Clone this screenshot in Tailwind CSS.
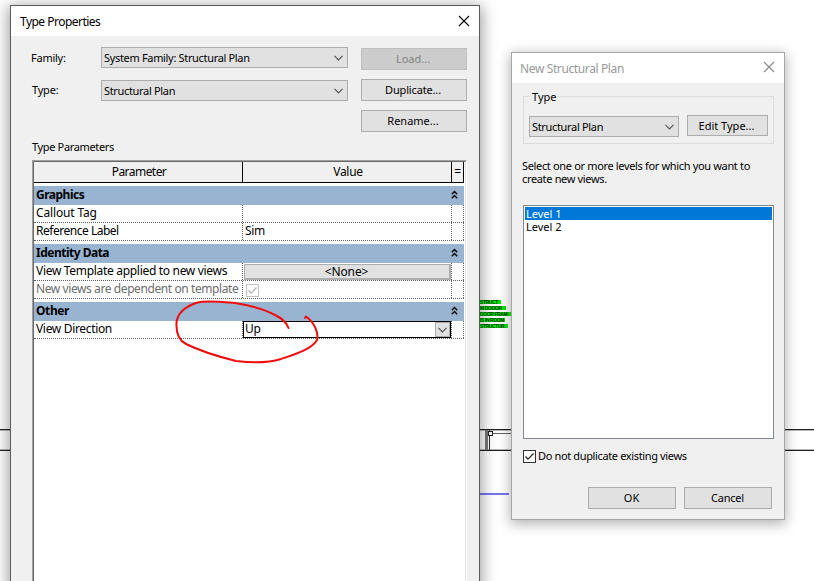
<!DOCTYPE html>
<html lang="en">
<head>
    <meta charset="UTF-8">
    <meta name="viewport" content="width=device-width, initial-scale=1.0">
    <title>Type Properties</title>
    <script src="https://cdn.jsdelivr.net/npm/@tailwindcss/browser@4"></script>
</head>
<body class="relative w-[814px] h-[581px] overflow-hidden bg-white text-black text-[11px] leading-[13px] whitespace-nowrap font-['Noto_Sans','Open_Sans',sans-serif]">

    <!-- Drawing behind the dialogs -->
    <svg class="absolute inset-0" width="814" height="581" shape-rendering="crispEdges">
        <path d="M0 429.5H814M0 450.5H814" stroke="#202020"/>
        <path d="M0 430.5H814M0 449.5H814" stroke="#b8b8b8"/>
        <path d="M486.500 430V450" stroke="#777" stroke-width="3"/>
        <path d="M489.5 430V450" stroke="#333"/>
        <path d="M490 433.5H512" stroke="#666"/>
        <rect x="488.5" y="431.5" width="4" height="4" fill="#fff" stroke="#222"/>
        <path d="M480 494H508.500" stroke="#7676f5" stroke-width="2"/>
    </svg>

    <!-- Type Properties -->
    <div class="absolute left-[10px] top-[5px] w-[470px] h-[600px] border border-[#5a5a5a] bg-[#f0f0f0] shadow-[0_3px_14px_2px_rgba(0,0,0,0.38)]">
        <div class="h-[30px] bg-white flex items-center justify-between pl-[9px] pr-[9px] text-[12px]">
            <span class="tracking-[-0.52px]">Type Properties</span>
            <svg width="12" height="12" class="mb-px"><path d="M1 1L11 11M11 1L1 11" stroke="#000" stroke-width="1.1"/></svg>
        </div>
        <div class="flex pt-[11px] pl-5">
            <div class="w-[70px]">
                <div class="h-[33px] pt-1 tracking-[-0.25px]">Family:</div>
                <div class="h-[33px] pt-[3px] pl-px tracking-[-0.2px]">Type:</div>
            </div>
            <div class="w-[247px] tracking-[-0.33px]">
                <div class="h-[21px] mb-3 border border-[#adadad] bg-[#e1e1e1] flex items-center justify-between pl-[2px] pr-1">
                    <span>System Family: Structural Plan</span>
                    <svg width="9" height="6"><path d="M.5 .8L4.500 4.800L8.500 .8" fill="none" stroke="#555" stroke-width="1.2"/></svg>
                </div>
                <div class="h-[21px] border border-[#adadad] bg-[#e1e1e1] flex items-center justify-between pl-[2px] pr-1">
                    <span>Structural Plan</span>
                    <svg width="9" height="6"><path d="M.5 .8L4.500 4.800L8.500 .8" fill="none" stroke="#555" stroke-width="1.2"/></svg>
                </div>
            </div>
            <div class="ml-[13px] mt-px w-[106px] flex flex-col gap-[9px]">
                <button class="h-[22px] pb-px pr-[2px] border border-[#bfbfbf] bg-[#cccccc] text-[#838383]">Load...</button>
                <button class="h-[22px] pb-px pr-[2px] border border-[#adadad] bg-[#e1e1e1] tracking-[-0.15px]">Duplicate...</button>
                <button class="h-[22px] pb-px pr-[2px] border border-[#adadad] bg-[#e1e1e1]">Rename...</button>
            </div>
        </div>
        <div class="pl-[21px] mt-[8px] mb-[7px] tracking-[-0.35px]">Type Parameters</div>

        <div class="ml-[21px] w-[435px] h-[430px] border-l border-t border-[#a0a0a0] border-r border-r-white">
            <div class="h-full border-l border-t border-[#696969] border-r border-r-[#e3e3e3] bg-white pr-px text-[12px] tracking-[-0.33px]">
                <div class="w-[430px] h-[21px] flex bg-[#f0f0f0] border-b border-black text-center leading-[20px]">
                    <div class="w-[209px] pl-[2px] border-r border-black tracking-[-0.55px]">Parameter</div>
                    <div class="w-[209px] pl-[2px] border-r border-black">Value</div>
                    <div class="w-[12px] border-r border-black">=</div>
                </div>

                <div class="w-[430px] mt-[3px] h-[19px] bg-[#99b4d1] flex items-center justify-between pl-[2px] pr-[6px] pb-[2px] font-bold tracking-[-0.5px]">
                    <span>Graphics</span>
                    <svg width="7" height="9"><path d="M.8 4.200L3.500 1.500L6.200 4.200M.8 8.200L3.500 5.500L6.200 8.200" fill="none" stroke="#000" stroke-width="1.4"/></svg>
                </div>
                <div class="w-[430px] h-[18px] flex border-b border-dotted border-[#606060] leading-[16px]">
                    <div class="w-[209px] pl-[2px] border-r border-dotted border-[#606060] tracking-[-0.15px]">Callout Tag</div>
                    <div class="w-[209px] border-r border-dotted border-[#606060]"></div>
                    <div class="w-[12px] border-r border-dotted border-[#606060]"></div>
                </div>
                <div class="w-[430px] h-[18px] flex border-b border-dotted border-[#606060] leading-[16px]">
                    <div class="w-[209px] pl-[2px] border-r border-dotted border-[#606060] tracking-[-0.48px]">Reference Label</div>
                    <div class="w-[209px] pl-[2px] border-r border-dotted border-[#606060]">Sim</div>
                    <div class="w-[12px] border-r border-dotted border-[#606060]"></div>
                </div>

                <div class="w-[430px] mt-[3px] h-[19px] bg-[#99b4d1] flex items-center justify-between pl-[2px] pr-[6px] pb-[2px] font-bold tracking-[-0.5px]">
                    <span>Identity Data</span>
                    <svg width="7" height="9"><path d="M.8 4.200L3.500 1.500L6.200 4.200M.8 8.200L3.500 5.500L6.200 8.200" fill="none" stroke="#000" stroke-width="1.4"/></svg>
                </div>
                <div class="w-[430px] h-[18px] flex border-b border-dotted border-[#606060] leading-[16px]">
                    <div class="w-[209px] pl-[2px] border-r border-dotted border-[#606060] tracking-[-0.31px]">View Template applied to new views</div>
                    <div class="w-[209px] pl-px pt-px border-r border-dotted border-[#606060]">
                        <div class="h-4 w-[207px] bg-[#e1e1e1] border border-[#adadad] border-r-2 border-b-2 text-center leading-[14px] tracking-[-0.1px] pr-px">&lt;None&gt;</div>
                    </div>
                    <div class="w-[12px] border-r border-dotted border-[#606060]"></div>
                </div>
                <div class="w-[430px] h-[18px] flex border-b border-dotted border-[#606060] leading-[16px]">
                    <div class="w-[209px] pl-[2px] border-r border-dotted border-[#606060] text-[#6d6d6d] tracking-[-0.41px]">New views are dependent on template</div>
                    <div class="w-[209px] pl-[3px] pt-[3px] border-r border-dotted border-[#606060]">
                        <svg width="13" height="13"><rect x=".5" y=".5" width="12" height="12" fill="#fff" stroke="#c4c4c4"/><path d="M2.500 6.500L5 9.200L10.500 3.500" fill="none" stroke="#b0b0b0" stroke-width="1.2"/></svg>
                    </div>
                    <div class="w-[12px] border-r border-dotted border-[#606060]"></div>
                </div>

                <div class="w-[430px] mt-[3px] h-[19px] bg-[#99b4d1] flex items-center justify-between pl-[2px] pr-[6px] pb-[2px] font-bold tracking-[-0.4px]">
                    <span>Other</span>
                    <svg width="7" height="9"><path d="M.8 4.200L3.500 1.500L6.200 4.200M.8 8.200L3.500 5.500L6.200 8.200" fill="none" stroke="#000" stroke-width="1.4"/></svg>
                </div>
                <div class="w-[430px] h-[18px] flex border-b border-dotted border-[#606060] leading-[16px]">
                    <div class="w-[209px] pl-[2px] border-r border-dotted border-[#606060]">View Direction</div>
                    <div class="w-[208px] h-[17px] border border-black bg-white flex justify-between pl-px leading-[14px]">
                        <span>Up</span>
                        <div class="w-[15px] h-[15px] bg-[#e1e1e1] border border-[#adadad] flex items-center justify-center">
                            <svg width="9" height="6"><path d="M.5 .8L4.500 4.800L8.500 .8" fill="none" stroke="#555" stroke-width="1.2"/></svg>
                        </div>
                    </div>
                    <div class="w-px border-r border-dotted border-[#606060]"></div>
                    <div class="w-[12px] border-r border-dotted border-[#606060]"></div>
                </div>
            </div>
        </div>
    </div>

    <!-- Room tags, visible between the dialogs -->
    <div class="absolute left-[480px] top-[300px] flex flex-col items-start gap-[2px] text-[5px] leading-[4px] font-bold tracking-[-0.4px] text-black/80 font-['Liberation_Sans',sans-serif]">
        <div class="w-[21px] h-[4px] bg-[#00e800]">STRUCT</div>
        <div class="w-[26px] h-[4px] bg-[#00e800]">M DOOOR</div>
        <div class="w-[31px] h-[4px] bg-[#00e800]">DOOR FRAM</div>
        <div class="w-[25px] h-[4px] bg-[#00e800]">IS IN ROOM</div>
        <div class="w-[28px] h-[4px] bg-[#00e800]">STRUCTUR.</div>
    </div>

    <!-- New Structural Plan -->
    <div class="absolute left-[511px] top-[52px] w-[274px] h-[468px] border border-[#a6a6a6] bg-[#f0f0f0] shadow-[0_3px_12px_1px_rgba(0,0,0,0.3)]">
        <div class="h-[30px] bg-white flex items-center justify-between pl-2 pr-[9px] text-[12px] text-[#999]">
            <span class="tracking-[-0.38px]">New Structural Plan</span>
            <svg width="12" height="12" class="mb-[2px]"><path d="M1 1L11 11M11 1L1 11" stroke="#888" stroke-width="1.1"/></svg>
        </div>
        <fieldset class="relative ml-[11px] mt-[13px] w-[251px] h-[48px] border border-[#dcdcdc] flex items-start pl-[5px] pt-[18px]">
            <span class="absolute left-[6px] top-[-7px] bg-[#f0f0f0] px-[2px]">Type</span>
            <div class="mt-px w-[150px] h-[21px] border border-[#adadad] bg-[#e1e1e1] flex items-center justify-between pl-[2px] pr-1">
                <span class="tracking-[-0.33px]">Structural Plan</span>
                <svg width="9" height="6"><path d="M.5 .8L4.500 4.800L8.500 .8" fill="none" stroke="#555" stroke-width="1.2"/></svg>
            </div>
            <button class="ml-2 w-[81px] h-[21px] pr-[2px] border border-[#adadad] bg-[#e1e1e1]">Edit Type...</button>
        </fieldset>
        <p class="pl-[10px] mt-[15px] tracking-[-0.34px]">Select one or more levels for which you want to<br>create new views.</p>
        <div class="ml-[11px] mt-[20px] w-[251px] h-[234px] border border-[#828790] bg-white p-px">
            <div class="h-[13px] bg-[#0078d7] text-white pl-px">Level 1</div>
            <div class="h-[13px] pl-px">Level 2</div>
        </div>
        <div class="ml-[11px] mt-[11px] flex items-start">
            <svg width="13" height="13"><rect x=".5" y=".5" width="12" height="12" fill="#fff" stroke="#333"/><path d="M2.500 6.500L5 9.200L10.500 3.500" fill="none" stroke="#222" stroke-width="1.2"/></svg>
            <span class="ml-[2px] -mt-px tracking-[-0.36px]">Do not duplicate existing views</span>
        </div>
        <div class="mt-6 ml-[76px] flex gap-2">
            <button class="w-[88px] h-[22px] pb-[2px] pr-px border border-[#adadad] bg-[#e1e1e1]">OK</button>
            <button class="w-[88px] h-[22px] pb-[2px] pr-px border border-[#adadad] bg-[#e1e1e1] tracking-[-0.2px]">Cancel</button>
        </div>
    </div>

    <!-- Red pen mark -->
    <svg class="absolute inset-0" width="814" height="581" fill="none" stroke="#f00d0d" stroke-width="2" stroke-linecap="round" stroke-linejoin="round">
        <path d="M288.500 328C286 321 281 318 275 315C262 308 248 305 235 303C222 302 207 300 196 303C185 307 177 314 176.500 323C176 333 178 340 186 344C200 351 220 357 236 361C252 363 268 363 281 359C296 354 312 349 317 340C319 333 314 322 306 316.500L305 318"/>
    </svg>
</body>
</html>
